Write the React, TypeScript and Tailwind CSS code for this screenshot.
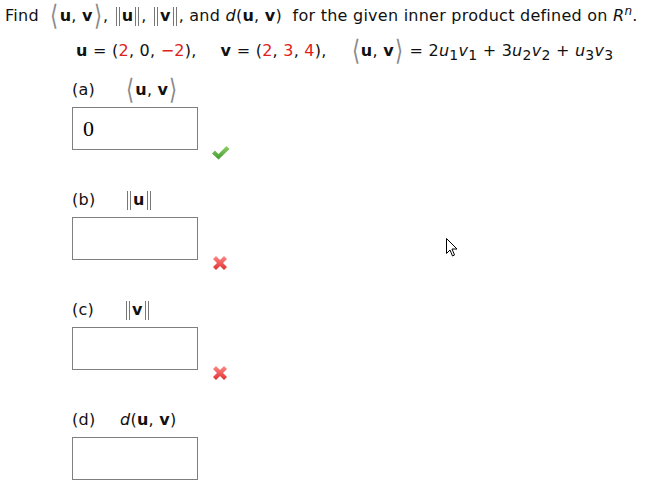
import React from "react";

const LB = () => (
  <span className="inline-block align-top text-[#8a8a8a] text-[21px] leading-[20px] font-light mx-[1px] scale-y-[1.35] origin-center">⟨</span>
);
const RB = () => (
  <span className="inline-block align-top text-[#8a8a8a] text-[21px] leading-[20px] font-light mx-[1px] scale-y-[1.35] origin-center">⟩</span>
);
const Bars = () => (
  <span className="inline-block h-[19px] w-[4px] border-x border-[#777] align-[-5px] mx-[2px]" />
);
const Red = ({ children }: { children: React.ReactNode }) => <span className="text-[#e0201c]">{children}</span>;
const Sub = ({ children }: { children: React.ReactNode }) => (
  <span className="text-[14px] relative top-[4px]">{children}</span>
);

const Check = () => (
  <svg width="19" height="15" viewBox="0 0 19 15">
    <defs>
      <linearGradient id="g" x1="0" y1="0" x2="0" y2="1">
        <stop offset="0" stopColor="#8fd16a" />
        <stop offset="1" stopColor="#3f9a2e" />
      </linearGradient>
    </defs>
    <path d="M1 8.5 L4 5.5 L7.5 9 L15.5 1 L18.5 4 L7.5 14.5 Z" fill="url(#g)" />
  </svg>
);

const Cross = () => (
  <svg width="18" height="16" viewBox="0 0 18 16">
    <defs>
      <linearGradient id="r" x1="0" y1="0" x2="0" y2="1">
        <stop offset="0" stopColor="#ff8a8a" />
        <stop offset="1" stopColor="#e0302f" />
      </linearGradient>
    </defs>
    <path d="M2 4 L5 1 L9 5 L13 1 L16 4 L12 8 L16 12 L13 15 L9 11 L5 15 L2 12 L6 8 Z" fill="url(#r)" />
  </svg>
);

function Section({
  label,
  math,
  labelW,
  value,
  mark,
}: {
  label: string;
  math: React.ReactNode;
  labelW: string;
  value?: string;
  mark?: "ok" | "bad";
}) {
  return (
    <div className="flex flex-col h-[110px] pl-[72px]">
      <div className="flex items-center h-[20px]">
        <span className={labelW}>{label}</span>
        <span className="leading-[20px]">{math}</span>
      </div>
      <div className="flex mt-[7px]">
        <div className="w-[126px] h-[43px] border border-[#7f7f7f] flex items-center pl-[10px] text-[22px] text-black" style={{ fontFamily: '"Liberation Serif", serif' }}>
          {value}
        </div>
        {mark && (
          <div className="ml-[13px] mt-[38px]">{mark === "ok" ? <Check /> : <Cross />}</div>
        )}
      </div>
    </div>
  );
}

export default function App() {
  return (
    <div
      className="relative w-[663px] h-[486px] bg-white text-[#111] text-[16px] leading-[20px] tracking-[0.25px] overflow-hidden"
      style={{ fontFamily: '"DejaVu Sans", sans-serif' }}
    >
      <div className="mt-[6px] ml-[5px] h-[20px] whitespace-nowrap">
        Find&nbsp; <LB /><b>u</b>, <b>v</b><RB />, <Bars /><b>u</b><Bars />, <Bars /><b>v</b><Bars />, and <i>d</i>(<b>u</b>, <b>v</b>)&nbsp; for the given inner product defined on <i>R</i><sup><i>n</i></sup>.
      </div>
      <div className="mt-[15px] pl-[76px] h-[20px] whitespace-nowrap flex">
        <span>
          <b>u</b> = (<Red>2</Red>, 0, <Red>−2</Red>),
        </span>
        <span className="ml-[24px]">
          <b>v</b> = (<Red>2</Red>, <Red>3</Red>, <Red>4</Red>),
        </span>
        <span className="ml-[24px]">
          <LB /><b>u</b>, <b>v</b><RB /> = 2<i>u</i><Sub>1</Sub><i>v</i><Sub>1</Sub> + 3<i>u</i><Sub>2</Sub><i>v</i><Sub>2</Sub> + <i>u</i><Sub>3</Sub><i>v</i><Sub>3</Sub>
        </span>
      </div>
      <div className="mt-[19px]">
        <Section label="(a)" labelW="w-[53px]" math={<><LB /><b>u</b>, <b>v</b><RB /></>} value="0" mark="ok" />
        <Section label="(b)" labelW="w-[53px]" math={<><Bars /><b>u</b><Bars /></>} mark="bad" />
        <Section label="(c)" labelW="w-[52px]" math={<><Bars /><b>v</b><Bars /></>} mark="bad" />
        <Section label="(d)" labelW="w-[48px]" math={<><i>d</i>(<b>u</b>, <b>v</b>)</>} />
      </div>
      <svg className="absolute left-[446px] top-[238px]" width="12" height="20" viewBox="0 0 12 20">
        <path d="M0.5 0.5 L0.5 15.5 L4 12 L6.5 18 L8.5 17 L6 11 L11 11 Z" fill="white" stroke="black" strokeWidth="1" strokeLinejoin="miter" />
      </svg>
    </div>
  );
}
